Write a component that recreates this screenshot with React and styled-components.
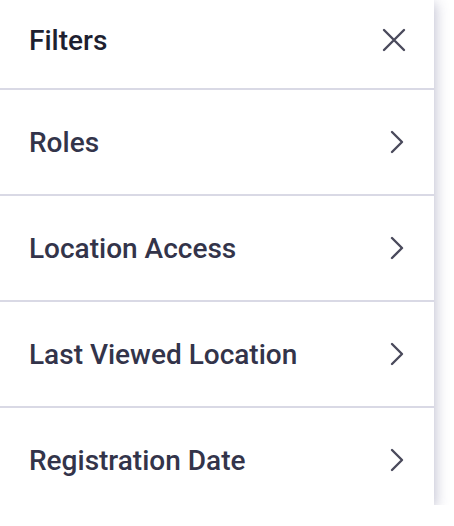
import React from 'react'
import styled, { createGlobalStyle } from 'styled-components'

const GlobalStyle = createGlobalStyle`
  body {
    margin: 0;
    background: #fff;
    font-family: Roboto, "Noto Sans", sans-serif;
  }
`

const filters = ['Roles', 'Location Access', 'Last Viewed Location', 'Registration Date']

const CloseIcon = () => (
  <svg width="24" height="24" viewBox="0 0 24 24" fill="none">
    <path d="M2 2L22 22M22 2L2 22" stroke="#4a4a5c" strokeWidth="2.4" strokeLinecap="round" />
  </svg>
)

const ChevronIcon = () => (
  <svg width="16" height="24" viewBox="0 0 16 24" fill="none">
    <path d="M3 2L13 12L3 22" stroke="#4a4a5c" strokeWidth="2.4" strokeLinecap="round" strokeLinejoin="round" />
  </svg>
)

const App = () => {
  return (
    <>
      <GlobalStyle />
      <Panel>
        <Header>
          <Title>Filters</Title>
          <IconButton aria-label="Close">
            <CloseIcon />
          </IconButton>
        </Header>
        {filters.map((name) => (
          <Row key={name}>
            <Label>{name}</Label>
            <ChevronIcon />
          </Row>
        ))}
      </Panel>
    </>
  )
}

const Panel = styled.div`
  width: 434px;
  height: 505px;
  overflow: hidden;
  background: #fff;
  box-shadow: 2px 3px 12px rgba(70, 70, 120, 0.32);
  display: flex;
  flex-direction: column;
`

const Header = styled.div`
  height: 90px;
  box-sizing: border-box;
  padding: 0 28px 8px 29px;
  display: flex;
  align-items: center;
  justify-content: space-between;
  border-bottom: 2px solid #d9d9e5;
  flex-shrink: 0;
`

const Title = styled.h2`
  margin: 0;
  font-size: 28px;
  font-weight: 500;
  color: #1e1f30;
`

const IconButton = styled.button`
  border: 0;
  padding: 0;
  background: none;
  display: flex;
  cursor: pointer;
`

const Row = styled.div`
  height: 106px;
  box-sizing: border-box;
  padding: 0 29px 0 29px;
  display: flex;
  align-items: center;
  justify-content: space-between;
  border-bottom: 2px solid #d9d9e5;
  flex-shrink: 0;
  cursor: pointer;
`

const Label = styled.span`
  font-size: 28px;
  font-weight: 500;
  color: #33344a;
`

export default App
